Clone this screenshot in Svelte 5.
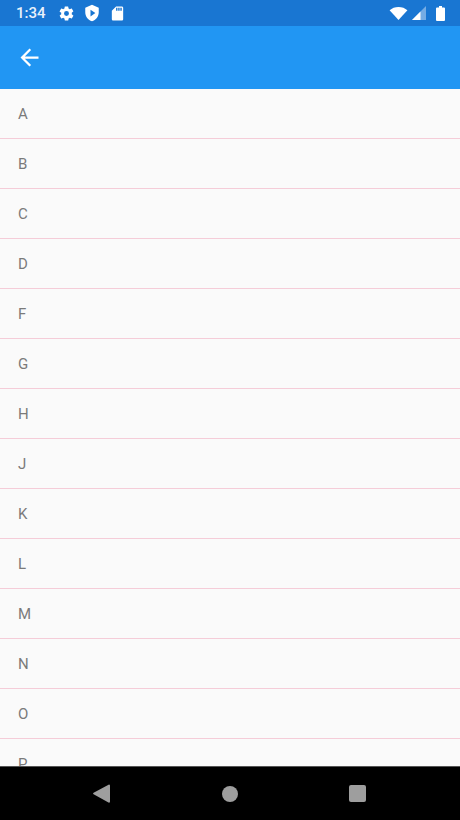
<script>
  const letters = ['A','B','C','D','F','G','H','J','K','L','M','N','O','P'];
</script>

<div class="screen">
  <header class="status">
    <div class="left">
      <span class="time">1:34</span>
      <svg class="ic" viewBox="0 0 24 24" width="17" height="17"><path fill="#fff" d="M19.4 13c.04-.32.1-.66.1-1s-.06-.68-.1-1l2.1-1.65c.2-.15.25-.42.12-.64l-2-3.46c-.12-.22-.39-.3-.61-.22l-2.49 1c-.52-.4-1.08-.73-1.69-.98l-.38-2.65A.49.49 0 0 0 14 2h-4c-.25 0-.46.18-.49.42l-.38 2.65c-.61.25-1.17.59-1.69.98l-2.49-1a.5.5 0 0 0-.61.22l-2 3.46c-.13.22-.07.49.12.64L4.600 11c-.04.32-.1.66-.1 1s.06.68.1 1l-2.1 1.65c-.19.15-.25.42-.12.64l2 3.46c.12.22.39.3.61.22l2.49-1c.52.4 1.08.73 1.69.98l.38 2.65c.03.24.24.42.49.42h4c.25 0 .46-.18.49-.42l.38-2.65c.61-.25 1.17-.59 1.69-.98l2.49 1c.23.09.49 0 .61-.22l2-3.46c.12-.22.07-.49-.12-.64zM12 15.500a3.500 3.500 0 1 1 0-7 3.500 3.500 0 0 1 0 7z"/></svg>
      <svg class="ic" viewBox="0 0 24 24" width="18" height="18"><path fill="#fff" fill-rule="evenodd" d="M12 1 3 5v6c0 5.500 3.800 10.700 9 12 5.200-1.300 9-6.500 9-12V5zM10 7.500l6.500 4.500-6.500 4.500z"/></svg>
      <svg class="ic" viewBox="0 0 24 24" width="17" height="17"><path fill="#fff" fill-rule="evenodd" d="M18 2h-8L4 8v12c0 1.100.9 2 2 2h12c1.100 0 2-.9 2-2V4c0-1.100-.9-2-2-2zM12 8h-2V4h2zm3 0h-2V4h2zm3 0h-2V4h2z"/></svg>
    </div>
    <div class="right">
      <svg viewBox="0 0 20 16" width="19" height="15"><path fill="#fff" d="M10 15 .5 4.500C3 2.300 6.300 1 10 1s7 1.300 9.500 3.500z"/></svg>
      <svg class="signal" viewBox="0 0 14 14" width="14" height="14"><path fill="#fff" fill-opacity=".4" d="M14 0v14H0z"/><path fill="#fff" d="M8.500 5.500V14H0z"/></svg>
      <svg class="battery" viewBox="0 0 9 15" width="9" height="15"><path fill="#fff" d="M3 0h3v1.500h2a1 1 0 0 1 1 1V14a1 1 0 0 1-1 1H1a1 1 0 0 1-1-1V2.500a1 1 0 0 1 1-1h2z"/></svg>
    </div>
  </header>

  <nav class="toolbar">
    <svg viewBox="0 0 24 24" width="27" height="27"><path fill="#fff" d="M20 11H7.830l5.590-5.590L12 4l-8 8 8 8 1.410-1.410L7.830 13H20z"/></svg>
  </nav>

  <ul class="list">
    {#each letters as l}
      <li>{l}</li>
    {/each}
  </ul>

  <footer class="nav">
    <svg viewBox="0 0 17 19" width="17" height="19"><path fill="#9e9e9e" d="M16 .5a1 1 0 0 1 1 .9v16.200a1 1 0 0 1-1.500.8L.6 10.300a1 1 0 0 1 0-1.600z"/></svg>
    <span class="dot"></span>
    <span class="square"></span>
  </footer>
</div>

<style>
  :global(body) { margin: 0; }
  .screen {
    width: 460px;
    height: 820px;
    display: flex;
    flex-direction: column;
    overflow: hidden;
    background: #fafafa;
    font-family: Roboto, "Liberation Sans", sans-serif;
  }
  .status {
    flex: none;
    height: 26px;
    background: #1976d2;
    display: flex;
    align-items: center;
    justify-content: space-between;
    padding: 0 15px 0 16px;
    color: #fff;
  }
  .left, .right { display: flex; align-items: center; }
  .left { gap: 8px; }
  .time { font-size: 15px; font-weight: 500; margin-right: 4px; color: #e8f1fb; }
  .right { gap: 4px; }
  .signal { margin-right: 6px; }
  .toolbar {
    flex: none;
    height: 63px;
    background: #2196f3;
    display: flex;
    align-items: center;
    padding-left: 16px;
  }
  .list {
    flex: 1;
    min-height: 0;
    overflow: hidden;
    list-style: none;
    margin: 0;
    padding: 0;
  }
  li {
    box-sizing: border-box;
    height: 50px;
    padding: 1px 0 0 18px;
    display: flex;
    align-items: center;
    font-size: 15px;
    color: #7a7a7a;
    border-bottom: 1px solid #f5ccd8;
  }
  .nav {
    flex: none;
    height: 54px;
    background: #000;
    border-top: 1px solid #555;
    box-sizing: border-box;
    display: flex;
    justify-content: space-between;
    align-items: center;
    padding: 0 94px 0 93px;
  }
  .dot { width: 16px; height: 16px; border-radius: 50%; background: #9e9e9e; }
  .square { width: 17px; height: 17px; border-radius: 2px; background: #9e9e9e; }
</style>
